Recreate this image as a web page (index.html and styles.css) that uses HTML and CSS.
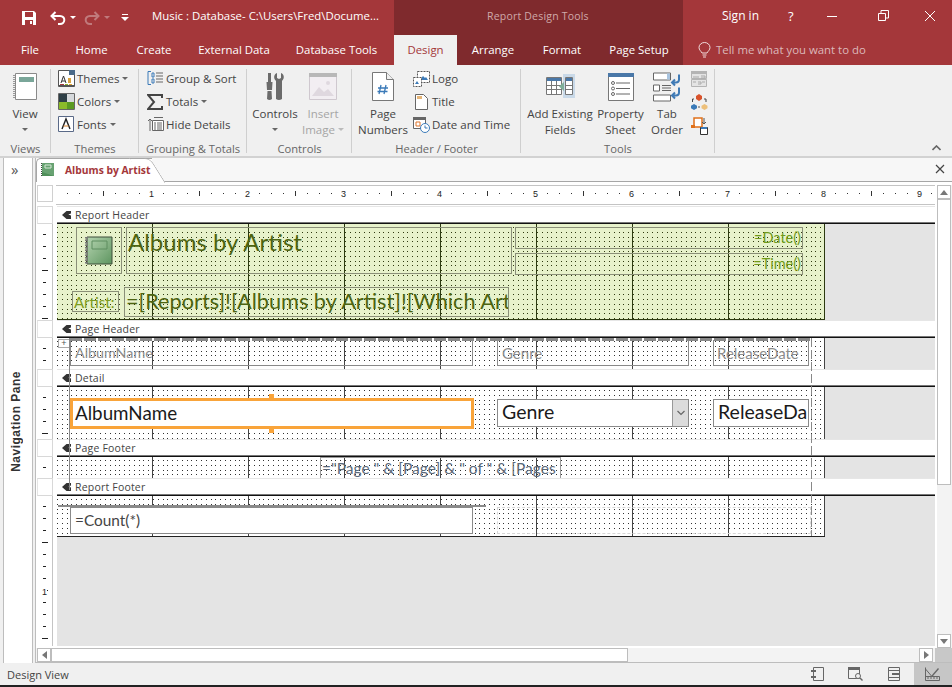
FILE: index.html
```html
<!DOCTYPE html>
<html lang="en">
<head>
    <meta charset="UTF-8">
    <title>Music : Database - Report Design</title>
    <link rel="stylesheet" href="styles.css">
</head>
<body>
    <!-- Title bar -->
    <header class="titlebar">
        <div class="qat">
            <svg class="qat-save" width="16" height="16" viewBox="0 0 16 16"><path d="M1 1h12l2 2v12H1z" fill="#fff"/><path d="M4 2h8v5H4z" fill="#a4373a"/><path d="M4 10h8v5H4z" fill="#a4373a"/><path d="M9 11h2v3H9z" fill="#fff"/></svg>
            <svg class="qat-undo" width="16" height="16" viewBox="0 0 16 16"><path d="M5.500 2 1.500 6l4 4M2 6h8c6 0 5.500 8 0 8H8" fill="none" stroke="#fff" stroke-width="2"/></svg>
            <span class="caret caret-white qat-c1"></span>
            <svg class="qat-redo" width="16" height="16" viewBox="0 0 16 16"><path d="M10.500 2l4 4-4 4M14 6H6c-6 0-5.500 8 0 8h2" fill="none" stroke="#c07a7c" stroke-width="2"/></svg>
            <span class="caret caret-faded qat-c2"></span>
            <svg class="qat-more" width="9" height="9" viewBox="0 0 9 9"><path d="M1 1h6v1H1z" fill="#fff"/><path d="M0 4h8L4 8z" fill="#fff"/></svg>
        </div>
        <div class="doc-title">Music : Database- C:\Users\Fred\Docume...</div>
        <div class="context-title">Report Design Tools</div>
        <div class="window-btns">
            <span class="sign-in">Sign in</span>
            <span class="help">?</span>
            <svg class="win-min" width="12" height="12" viewBox="0 0 12 12"><path d="M1 6.500h10" stroke="#fff"/></svg>
            <svg class="win-max" width="12" height="12" viewBox="0 0 12 12"><path d="M.5 3.500h7v7h-7zM3 3.500v-3h7.500v7.500h-3" fill="none" stroke="#fff"/></svg>
            <svg class="win-close" width="12" height="12" viewBox="0 0 12 12"><path d="M1 1l10 10M11 1 1 11" stroke="#fff"/></svg>
        </div>
    </header>

    <!-- Ribbon tabs -->
    <nav class="tabs">
        <a class="tab w-file">File</a>
        <a class="tab w-home">Home</a>
        <a class="tab w-create">Create</a>
        <a class="tab w-ext">External Data</a>
        <a class="tab w-db">Database Tools</a>
        <div class="context-tabs">
            <a class="tab w-design active">Design</a>
            <a class="tab w-arrange">Arrange</a>
            <a class="tab w-format">Format</a>
            <a class="tab w-setup">Page Setup</a>
        </div>
        <div class="tell-me">
            <svg width="13" height="16" viewBox="0 0 13 16"><path d="M4 11C3 9 1 8 1 5.500a5.500 5 0 0 1 11 0C12 8 10 9 9 11zM4.500 13h4M5 15h3" fill="none" stroke="#f1dcdc"/></svg>
            <span>Tell me what you want to do</span>
        </div>
    </nav>

    <!-- Ribbon -->
    <section class="ribbon">
        <div class="group g-views">
            <div class="group-body">
                <div class="big w-view">
                    <svg class="big-icon" width="26" height="30" viewBox="0 0 26 30"><path d="M3.500 1.500h21v26h-21z" fill="#fff" stroke="#8a8a8a"/><path d="M7 5h15v5H7z" fill="#7aa699"/><path d="M2 3v24" stroke="#999" stroke-width="2" stroke-dasharray="1 1"/></svg>
                    <span>View</span>
                    <span class="caret caret-grey"></span>
                </div>
            </div>
            <div class="group-label">Views</div>
        </div>

        <div class="group g-themes">
            <div class="group-body small-list">
                <div class="small">
                    <svg width="17" height="17" viewBox="0 0 17 17"><path d="M.5.500h16v16H.5z" fill="#fff" stroke="#555"/><path d="M11 0h6v5h-6z" fill="#4a6a8a"/><path d="M1 15h15v2H1z" fill="#555"/><path d="M3 13l2.500-7L8 13M4 11h3" fill="none" stroke="#333"/><path d="M10 8h3v5h-3z" fill="#d9a441"/><path d="M2 14h4v1H2z" fill="#a4373a"/><path d="M7 14h3v1H7z" fill="#8bb12a"/><path d="M11 14h3v1h-3z" fill="#e0a030"/></svg>
                    <span>Themes</span><span class="caret caret-grey"></span>
                </div>
                <div class="small">
                    <svg width="17" height="17" viewBox="0 0 17 17"><path d="M.5.500h16v16H.5z" fill="#fff" stroke="#666"/><path d="M1 1h8v8H1z" fill="#2e3e46"/><path d="M9 1h7v8H9z" fill="#d6d9dc"/><path d="M1 9h8v7H1z" fill="#8bbb2a"/><path d="M9 9h7v7H9z" fill="#5a9a22"/></svg>
                    <span>Colors</span><span class="caret caret-grey"></span>
                </div>
                <div class="small">
                    <svg width="17" height="17" viewBox="0 0 17 17"><path d="M.5.500h15v15H.5z" fill="#fff" stroke="#5a6a88"/><path d="M4 13 8 3l4 10" fill="none" stroke="#222" stroke-width="1.400"/><path d="M5.500 10h5" stroke="#d9822b"/></svg>
                    <span>Fonts</span><span class="caret caret-grey"></span>
                </div>
            </div>
            <div class="group-label">Themes</div>
        </div>

        <div class="group g-grouping">
            <div class="group-body small-list">
                <div class="small">
                    <svg width="17" height="15" viewBox="0 0 17 15"><path d="M4 .500H1v13h3" fill="none" stroke="#3b7ab8"/><path d="M5 2h2v4H5zM5 8h2v4H5z" fill="none" stroke="#3b7ab8"/><path d="M9 2h7M9 5h7M9 8h7M9 11h7" stroke="#666"/></svg>
                    <span>Group &amp; Sort</span>
                </div>
                <div class="small">
                    <svg width="17" height="16" viewBox="0 0 17 16"><path d="M15 4V1H1l6 7-6 7h14v-3" fill="none" stroke="#444" stroke-width="2"/></svg>
                    <span>Totals</span><span class="caret caret-grey"></span>
                </div>
                <div class="small">
                    <svg width="17" height="15" viewBox="0 0 17 15"><path d="M3 14V2M1 4l2-2 2 2" fill="none" stroke="#666"/><path d="M7 .500h9" stroke="#666"/><path d="M5.500 3.500h11v10h-11z" fill="#fff" stroke="#666"/><path d="M7 6h2M7 8h2M7 10h2M7 12h2M10 6h5M10 8h5M10 10h5M10 12h5" stroke="#666"/></svg>
                    <span>Hide Details</span>
                </div>
            </div>
            <div class="group-label">Grouping &amp; Totals</div>
        </div>

        <div class="group g-controls">
            <div class="group-body">
                <div class="big w-controls">
                    <svg class="big-icon" width="20" height="30" viewBox="0 0 20 30"><path d="M3 1h3v9H3zM1.500 10h6l-.5 8H2zM2.500 19h4l.5 8q-2.500 2-5 0z" fill="#6b6b6b"/><path d="M12 1v5l2 1 2-1V1c3 1 4 5 1 8v18q-3 2-6 0V9C8 6 9 2 12 1z" fill="#6b6b6b"/></svg>
                    <span>Controls</span>
                    <span class="caret caret-grey"></span>
                </div>
                <div class="big w-image disabled">
                    <svg class="big-icon" width="28" height="30" viewBox="0 0 28 30"><path d="M.5 1.500h27v26H.5z" fill="#f2eef2" stroke="#cfc8cf"/><path d="M0 1h28v4H0z" fill="#b8b8b8"/><path d="M3 24l7-9 5 5 4-3 6 7z" fill="#dfd8df"/><circle cx="19" cy="11" r="2" fill="#dfd8df"/></svg>
                    <span>Insert</span>
                    <span>Image<i class="caret caret-faint"></i></span>
                </div>
            </div>
            <div class="group-label">Controls</div>
        </div>

        <div class="group g-header">
            <div class="group-body">
                <div class="big w-pagenum">
                    <svg class="big-icon" width="22" height="30" viewBox="0 0 22 30"><path d="M.5.500h14l7 7v21H.500z" fill="#fff" stroke="#777"/><path d="M14.500.500v7h7" fill="#eee" stroke="#777"/><path d="M9 13l-2 9M14 13l-2 9M6 16h10M5.500 19.500h10" stroke="#3b7ab8" stroke-width="1.300"/></svg>
                    <span>Page</span>
                    <span>Numbers</span>
                </div>
                <div class="small-list list-hf">
                    <div class="small">
                        <svg width="17" height="16" viewBox="0 0 17 16"><path d="M4.500.500h12v11h-12z" fill="#fff" stroke="#555" stroke-dasharray="2 1"/><path d="M7 9l3-4 2 2 1-1 2 3z" fill="#3b7ab8"/><path d="M.5 6.500h8v9h-8z" fill="#fff" stroke="#555" stroke-dasharray="2 1"/><path d="M2 13l2-3 2 3z" fill="#3b7ab8"/></svg>
                        <span>Logo</span>
                    </div>
                    <div class="small">
                        <svg width="17" height="16" viewBox="0 0 17 16"><path d="M2.500.500h8l4 4v11h-12z" fill="#fff" stroke="#666"/><path d="M4 2h5v3H4z" fill="#e6b577"/></svg>
                        <span>Title</span>
                    </div>
                    <div class="small">
                        <svg width="17" height="17" viewBox="0 0 17 17"><path d="M.5 2.500h12v10H.5z" fill="#fff" stroke="#666"/><path d="M0 1h13v3H0z" fill="#666"/><path d="M3 6h4v4H3z" fill="none" stroke="#e0752a"/><circle cx="12" cy="12" r="4.500" fill="#fff" stroke="#3b7ab8"/><path d="M12 9.500V12h2.500" fill="none" stroke="#3b7ab8"/></svg>
                        <span>Date and Time</span>
                    </div>
                </div>
            </div>
            <div class="group-label">Header / Footer</div>
        </div>

        <div class="group g-tools">
            <div class="group-body">
                <div class="big w-fields">
                    <svg class="big-icon" width="29" height="26" viewBox="0 0 29 26"><path d="M17 0h12v24H17z" fill="#c9d9e8"/><path d="M.5 3.500h15v17H.500z" fill="#fff" stroke="#777"/><path d="M1 4h14v3H1z" fill="#4a78a8"/><path d="M.5 11.500h15M.5 15.500h15M5.500 7v13M10.500 7v13" stroke="#777"/><path d="M19.500 3.500h7v17h-7z" fill="#fff" stroke="#777"/><path d="M20 4h6v3h-6z" fill="#4a78a8"/><path d="M19.500 11.500h7M19.500 15.500h7" stroke="#777"/><path d="M18 8v9l-5-4.500z" fill="#7fb09a"/></svg>
                    <span>Add Existing</span>
                    <span>Fields</span>
                </div>
                <div class="big w-sheet">
                    <svg class="big-icon" width="26" height="28" viewBox="0 0 26 28"><path d="M.5.500h25v27H.500z" fill="#fff" stroke="#777"/><path d="M0 0h26v4H0z" fill="#4a78a8"/><path d="M8 10h14M8 15.500h14M8 21h14" stroke="#666"/><circle cx="5" cy="10" r="1.500" fill="none" stroke="#666"/><circle cx="5" cy="15.500" r="1.500" fill="none" stroke="#666"/><circle cx="5" cy="21" r="1.500" fill="none" stroke="#666"/></svg>
                    <span>Property</span>
                    <span>Sheet</span>
                </div>
                <div class="big w-order">
                    <svg class="big-icon" width="29" height="29" viewBox="0 0 29 29"><path d="M.5.500h17v7H.500z" fill="#fff" stroke="#666"/><path d="M14 1h3v6h-3z" fill="#a8c4e0"/><path d="M.5 12.500h6v6h-6z" fill="#fff" stroke="#666"/><path d="M9 13h9M9 15.500h9M9 18h9" stroke="#666"/><path d="M.5 22.500h17v6H.500z" fill="#fff" stroke="#666"/><path d="M26 2v5q0 3-3 3h-3M22 7l-3 3 3 3M26 15v5q0 3-3 3h-3M22 20l-3 3 3 3" fill="none" stroke="#3f7ab5" stroke-width="2"/></svg>
                    <span>Tab</span>
                    <span>Order</span>
                </div>
                <div class="tool-col">
                    <svg width="17" height="17" viewBox="0 0 17 17"><path d="M.5.500h15v7H.500zM.5 8.500h15v7H.500z" fill="#e4e4e4" stroke="#b4b4b4"/><path d="M0 0h16v3H0z" fill="#b4b4b4"/><path d="M2 6h6M10 5h4v2h-4M2 11h3M7 11h3v2H7M11 11h3" fill="none" stroke="#aaa"/></svg>
                    <svg width="17" height="17" viewBox="0 0 17 17"><path d="M3 5H1.500v3M13 5h2v3" fill="none" stroke="#444"/><path d="M8 0l3 2v3L8 7 5 5V2z" fill="#d9532c"/><path d="M3 10l3 1.800v2.400L3 16 0 14.200v-2.400z" fill="#3b7ab8"/><path d="M13.500 10l3 1.800v2.400L13.500 16l-3-1.800v-2.400z" fill="#edc07a"/><path d="M7 13h2" stroke="#555"/></svg>
                    <svg width="17" height="18" viewBox="0 0 17 18"><path d="M3 1h8v9H1q2 0 2-2z" fill="#fff" stroke="#e0701a" stroke-width="1.500"/><path d="M0 8h4v3H0z" fill="#e0701a"/><path d="M13 1v6M11 5l2 2 2-2" fill="none" stroke="#555"/><path d="M9.500 10.500h7v7h-7z" fill="#fff" stroke="#333"/><path d="M10 10h6v2h-6z" fill="#3b7ab8"/></svg>
                </div>
            </div>
            <div class="group-label">Tools</div>
        </div>
        <svg class="collapse" width="9" height="6" viewBox="0 0 9 6"><path d="M.5 5l4-4 4 4" fill="none" stroke="#666" stroke-width="1.600"/></svg>
    </section>

    <!-- Document area -->
    <main class="workspace">
        <aside class="nav-pane">
            <span class="nav-arrows">&raquo;</span>
            <span class="nav-title">Navigation Pane</span>
        </aside>
        <div class="document">
            <div class="doc-tabs">
                <div class="doc-tab">
                    <svg width="13" height="13" viewBox="0 0 13 13"><path d="M1 0h12v13H1z" fill="#4f8f5a"/><path d="M1 0h12v13L1 9z" fill="#82b58a" opacity=".5"/><path d="M4 2h6v3H4z" fill="none" stroke="#d5e8d5"/><path d="M.5 0v13" stroke="#444" stroke-dasharray="1 1"/></svg>
                    <span>Albums by Artist</span>
                </div>
                <svg class="doc-close" width="10" height="10" viewBox="0 0 10 10"><path d="M1 1l8 8M9 1 1 9" stroke="#444" stroke-width="1.200"/></svg>
            </div>

            <div class="designer-row">
                <div class="designer">
                    <div class="h-ruler-row">
                        <div class="corner"></div>
                        <div class="h-ruler">
                            <span><b>1</b></span><span><b>2</b></span><span><b>3</b></span><span><b>4</b></span><span><b>5</b></span><span><b>6</b></span><span><b>7</b></span><span><b>8</b></span><span><b>9</b></span>
                        </div>
                    </div>

                    <div class="band-row">
                        <div class="selector"></div>
                        <div class="band"><i class="grip"></i>Report Header</div>
                    </div>
                    <div class="body-row h-96">
                        <div class="v-ruler"></div>
                        <div class="canvas canvas-green">
                            <div class="ctl ctl-picture">
                                <svg width="28" height="29" viewBox="0 0 28 29"><defs><linearGradient id="bookFill" x1="0" y1="0" x2="1" y2="1"><stop offset="0" stop-color="#b5d4b0"/><stop offset="1" stop-color="#5e9560"/></linearGradient></defs><path d="M2 1h25v27H2z" fill="url(#bookFill)" stroke="#3e4e3a"/><path d="M7 5h15v8H7z" fill="none" stroke="#5e8e60"/><path d="M1.500 1v27" stroke="#777" stroke-width="3" stroke-dasharray="1.500 1"/></svg>
                            </div>
                            <div class="ctl ctl-title">Albums by Artist</div>
                            <div class="ctl ctl-date">=Date()</div>
                            <div class="ctl ctl-time">=Time()</div>
                            <div class="ctl ctl-artist">Artist:</div>
                            <div class="ctl ctl-which">=[Reports]![Albums by Artist]![Which Art</div>
                        </div>
                        <div class="off-page"></div>
                    </div>

                    <div class="band-row">
                        <div class="selector"></div>
                        <div class="band"><i class="grip"></i>Page Header</div>
                    </div>
                    <div class="body-row h-31">
                        <div class="v-ruler"></div>
                        <div class="canvas">
                            <div class="dash-top"></div>
                            <div class="move-handle">+</div>
                            <div class="ctl lbl lbl-album">AlbumName</div>
                            <div class="ctl lbl lbl-genre">Genre</div>
                            <div class="ctl lbl lbl-release">ReleaseDate</div>
                        </div>
                        <div class="off-page"></div>
                    </div>

                    <div class="band-row">
                        <div class="selector"></div>
                        <div class="band"><i class="grip"></i>Detail</div>
                    </div>
                    <div class="body-row h-52">
                        <div class="v-ruler"></div>
                        <div class="canvas">
                            <div class="ctl fld fld-album">AlbumName</div>
                            <i class="handle handle-top"></i>
                            <i class="handle handle-bottom"></i>
                            <div class="ctl fld fld-genre">Genre<span class="combo"><svg width="10" height="6" viewBox="0 0 10 6"><path d="M1.500 1 5 4.500 8.500 1" fill="none" stroke="#666" stroke-width="1.200"/></svg></span></div>
                            <div class="ctl fld fld-release">ReleaseDa</div>
                        </div>
                        <div class="off-page"></div>
                    </div>

                    <div class="band-row">
                        <div class="selector"></div>
                        <div class="band"><i class="grip"></i>Page Footer</div>
                    </div>
                    <div class="body-row h-21">
                        <div class="v-ruler"></div>
                        <div class="canvas">
                            <div class="ctl ctl-pages">="Page " &amp; [Page] &amp; " of " &amp; [Pages</div>
                        </div>
                        <div class="off-page"></div>
                    </div>

                    <div class="band-row">
                        <div class="selector"></div>
                        <div class="band"><i class="grip"></i>Report Footer</div>
                    </div>
                    <div class="body-row h-41">
                        <div class="v-ruler"></div>
                        <div class="canvas canvas-last">
                            <div class="sum-line"></div>
                            <div class="ctl fld ctl-count">=Count(*)</div>
                            <div class="ghost-box"></div>
                        </div>
                        <div class="off-page"></div>
                    </div>
                    <div class="filler-row">
                        <div class="v-ruler v-ruler-end"><span class="v-num">1</span></div>
                        <div class="off-page"></div>
                    </div>

                    <div class="guide guide-left"></div>
                    <div class="guide guide-right"></div>
                </div>

                <div class="v-scroll">
                    <div class="sb-btn"><i class="arrow-up"></i></div>
                    <div class="v-thumb"></div>
                    <div class="v-track"></div>
                    <div class="sb-btn"><i class="arrow-down"></i></div>
                </div>
            </div>

            <div class="h-scroll">
                <div class="sb-btn"><i class="arrow-left"></i></div>
                <div class="h-thumb"></div>
                <div class="h-track"></div>
                <div class="sb-btn"><i class="arrow-right"></i></div>
                <div class="sb-corner"></div>
            </div>
        </div>
    </main>

    <!-- Status bar -->
    <footer class="statusbar">
        <span class="status-text">Design View</span>
        <div class="views">
            <span class="view-btn"><svg width="14" height="14" viewBox="0 0 14 14"><path d="M3.500.500h10v13h-10z" fill="none" stroke="#666"/><path d="M1 3h5v2H1zM1 9h5v2H1z" fill="#666"/></svg></span>
            <span class="view-btn"><svg width="15" height="14" viewBox="0 0 15 14"><path d="M.5.500h11v11H.500z" fill="none" stroke="#666"/><path d="M0 0h12v3H0z" fill="#666"/><circle cx="10" cy="9" r="2.500" fill="#f0f0f0" stroke="#666"/><path d="M12 11l2.500 2.500" stroke="#666" stroke-width="1.400"/></svg></span>
            <span class="view-btn"><svg width="13" height="14" viewBox="0 0 13 14"><path d="M.5.500h11v13H.500z" fill="none" stroke="#666"/><path d="M0 3.500h12M0 10.500h12" stroke="#666"/><path d="M4 6h8v2H4z" fill="#666"/></svg></span>
            <span class="view-btn view-active"><svg width="15" height="14" viewBox="0 0 15 14"><path d="M.5.500v13h14v-4H.5M.5 2l6 7" fill="none" stroke="#666"/><path d="M7 8l6-7 1 1-6 7-2 1z" fill="#666"/><path d="M3 10v2M6 10v2M9 10v2M12 10v2" stroke="#666"/></svg></span>
        </div>
    </footer>
</body>
</html>
```

FILE: styles.css
```css
* { box-sizing: border-box; }
body {
    margin: 0; width: 952px; height: 687px; overflow: hidden;
    background: #222; color: #444;
    font-family: "Open Sans", "Noto Sans", sans-serif; font-size: 11.5px;
}
svg { display: block; flex: none; }

/* Title bar */
.titlebar { height: 35px; background: #a4373a; color: #fff; display: flex; position: relative; }
.qat { width: 152px; display: flex; align-items: center; padding-left: 21px; }
.qat-undo { margin-left: 13px; }
.qat-c1 { margin-left: 4px; }
.qat-redo { margin-left: 8px; }
.qat-c2 { margin-left: 4px; }
.qat-more { margin-left: 11px; }
.doc-title { width: 242px; line-height: 31px; font-size: 11.4px; white-space: nowrap; }
.context-title {
    width: 289px; height: 35px; background: #7f2a2d; color: #cfa9aa;
    line-height: 32px; padding-left: 93px; font-size: 10.500px; letter-spacing: .2px;
}
.window-btns { flex: 1; display: flex; align-items: center; position: relative; height: 31px; }
.sign-in { margin-left: 39px; width: 66px; font-size: 12px; }
.help { width: 38px; font-size: 13px; }
.win-min { margin-right: 40px; }
.win-max { margin-right: 34px; }

/* Ribbon tabs */
.tabs { height: 30px; background: #a4373a; color: #fff; display: flex; font-size: 11.4px; }
.tab { display: block; text-align: center; line-height: 29px; }
.w-file { width: 60px; }
.w-home { width: 63px; }
.w-create { width: 62px; }
.w-ext { width: 98px; }
.w-db { width: 107px; margin-right: 4px; }
.w-design { width: 63px; }
.w-arrange { width: 72px; }
.w-format { width: 66px; }
.w-setup { width: 88px; }
.context-tabs { display: flex; background: #7f2a2d; }
.tab.active { background: #f0f0f0; color: #a4373a; }
.tell-me { display: flex; align-items: center; gap: 5px; padding-left: 15px; color: #dcb9ba; height: 29px; }

/* Ribbon */
.ribbon {
    height: 93px; background: #f0f0f0; display: flex; position: relative;
    border-bottom: 2px solid #d2d2d2;
}
.group { position: relative; display: flex; flex-direction: column; padding-top: 4px; }
.group::after {
    content: ""; position: absolute; right: 0; top: 4px; bottom: 3px; width: 1px; background: #cfcfcf;
}
.group-body { flex: 1; display: flex; }
.group-label { height: 14px; line-height: 14px; text-align: center; font-size: 11.200px; color: #666; }
.g-views { width: 51px; }
.g-themes { width: 88px; }
.g-grouping { width: 108px; }
.g-controls { width: 105px; }
.g-header { width: 169px; }
.g-tools { width: 194px; }

.big { display: flex; flex-direction: column; align-items: center; line-height: 16px; white-space: nowrap; }
.big-icon { height: 30px; margin: 3px 0 4px; }
.big .caret { margin-top: 6px; }
.disabled { color: #a5a5a5; }
.disabled .caret { margin: 0 0 2px 3px; display: inline-block; vertical-align: middle; }
.w-view { width: 50px; }
.w-controls { width: 50px; margin-left: 3px; }
.w-image { width: 46px; }
.w-pagenum { width: 60px; margin-left: 1px; }
.w-fields { width: 76px; margin-left: 1px; }
.w-sheet { width: 45px; }
.w-order { width: 48px; }

.small-list { flex-direction: column; padding: 1px 0 0 7px; gap: 6px; }
.list-hf { display: flex; padding-left: 0; margin-left: 0; }
.g-grouping .small-list { padding-left: 8px; }
.small { height: 17px; display: flex; align-items: center; gap: 2px; white-space: nowrap; }
.small .caret { margin-left: 1px; }
.tool-col { display: flex; flex-direction: column; gap: 6px; margin-top: 2px; }
.collapse { position: absolute; right: 11px; bottom: 5px; }

.caret { display: block; width: 0; height: 0; border: 3px solid transparent; border-bottom: 0; }
.caret-white { border-top-color: #fff; }
.caret-faded { border-top-color: #c07a7c; }
.caret-grey { border-top-color: #666; }
.caret-faint { border-top-color: #bbb; }

/* Workspace */
.workspace { height: 505px; display: flex; background: #f0f0f0; }
.nav-pane {
    width: 30px; margin-left: 3px; flex: none; background: #fff;
    border: 1px solid #bdbdbd; border-width: 0 1px; position: relative; margin-right: 2px;
}
.nav-arrows { position: absolute; left: 7px; top: 3px; font-size: 15px; line-height: 16px; color: #555; }
.nav-title {
    position: absolute; left: 5px; top: 213px; writing-mode: vertical-rl; transform: rotate(180deg);
    font: bold 12px "Liberation Sans", sans-serif; color: #333; letter-spacing: .5px;
}
.document { flex: 1; min-width: 0; display: flex; flex-direction: column; border-left: 1px solid #bdbdbd; }

.doc-tabs {
    height: 24px; background: #f7f7f7; border-bottom: 1px solid #a6a6a6;
    display: flex; justify-content: space-between; flex: none;
}
.doc-tab {
    width: 116px; height: 24px; background: #fff; border: 1px solid #a6a6a6; border-width: 1px 0 0 1px;
    border-radius: 5px 0 0 0; display: flex; align-items: center; gap: 11px; padding: 0 0 2px 4px;
    font: bold 10.300px "Open Sans", sans-serif; color: #a4373a; white-space: nowrap; position: relative;
}
.doc-tab span, .doc-tab svg { position: relative; z-index: 1; }
.doc-tab::after {
    content: ""; position: absolute; right: -6px; top: -1px; width: 20px; height: 24px; background: #fff;
    border: 1px solid #a6a6a6; border-width: 1px 1px 0 0; border-radius: 0 6px 0 0; transform: skewX(32deg);
}
.doc-close { margin: 6px 7px 0 0; }

.designer-row { height: 466px; display: flex; padding-top: 3px; background: #fff; flex: none; }
.designer { width: 900px; margin-left: 1px; position: relative; flex: none; border-right: 2px solid #fff; }
.h-ruler-row { height: 21px; display: flex; }
.corner { width: 16px; height: 17px; border: 1px solid #d0d0d0; }
.h-ruler {
    flex: 1; height: 20px; display: flex; margin-left: 3px; border: solid #c4c4c4; border-width: 1px 0;
    font: 9px/16px "Liberation Sans", sans-serif; color: #222;
    background:
        repeating-linear-gradient(to right, transparent 0 47px, #333 47px 48px) 0 5px / 100% 5px no-repeat,
        repeating-linear-gradient(to right, transparent 0 11px, #333 11px 12px) 0 7px / 100% 1px no-repeat;
}
.h-ruler span { width: 96px; flex: none; text-align: right; position: relative; left: 3px; }
.h-ruler b { font-weight: normal; background: #fff; display: inline-block; height: 14px; padding: 0 1px; }

.band-row { display: flex; height: 18px; }
.selector { width: 16px; flex: none; background: #fff; border: 1px solid #d8d8d8; border-left-color: #e4e4e4; margin-right: 4px; }
.band {
    flex: 1; background: #fff; border-top: 1px solid #e6e6e6; border-bottom: 1px solid #111;
    box-shadow: inset 0 -1px 0 #777;
    display: flex; align-items: center; padding-left: 5px; gap: 4px;
    font-size: 10.500px; line-height: 14px; color: #444; letter-spacing: .2px;
}
.grip { width: 9px; height: 8px; background: #333; clip-path: polygon(0 50%, 50% 0, 100% 0, 100% 30%, 70% 45%, 100% 55%, 100% 100%, 50% 100%); }

.body-row { display: flex; position: relative; }
.h-96 { height: 96px; }
.h-31 { height: 31px; }
.h-52 { height: 52px; }
.h-21 { height: 21px; }
.h-41 { height: 41px; }
.filler-row { display: flex; height: 109px; }

.v-ruler {
    width: 16px; margin-right: 4px; flex: none; background-color: #fff;
    background-image: linear-gradient(to bottom, transparent 10px, #222 10px, #222 11px, transparent 11px), linear-gradient(to bottom, transparent 46px, #222 46px, #222 47px, transparent 47px);
    background-size: 3px 12px, 6px 48px;
    background-position: center 0, center 0;
    background-repeat: repeat-y;
    border-right: 1px solid #c4c4c4;
}
.v-ruler-end { position: relative; background-position: center 7px, center 7px; }
.v-num { position: absolute; left: 5px; top: 50px; font: 9px/11px "Liberation Sans", sans-serif; color: #222; background: #fff; }

.canvas {
    --paper: #fff; --dot: #333; --line: #444;
    width: 768px; flex: none; position: relative;
    background-color: var(--paper);
    background-image:
        repeating-linear-gradient(to right, transparent 0 95px, var(--line) 95px 96px),
        repeating-linear-gradient(to right, transparent 0 1px, var(--paper) 1px 4.8px),
        repeating-linear-gradient(to bottom, var(--paper) 0 3px, var(--dot) 3px 4px, var(--paper) 4px 4.8px);
}
.canvas-green { --paper: #e7f2cb; --dot: #2f3a10; --line: #2c3a10; border-bottom: 1px solid #2c3a10; }
.canvas-last { border-bottom: 1px solid #222; }
.off-page { flex: 1; background: #e4e4e4; }

/* Report controls */
.ctl { position: absolute; white-space: nowrap; overflow: hidden; }
.ctl-picture { left: 19px; top: 3px; width: 46px; height: 47px; border: 1px solid #8a8f78; display: flex; align-items: center; justify-content: center; }
.ctl-title {
    left: 69px; top: 3px; width: 386px; height: 47px; border: 1px solid #8a8f78; overflow: visible;
    font: 24px/28px Lato, sans-serif; color: #4d6410; padding-left: 1px;
}
.ctl-date, .ctl-time {
    left: 458px; width: 288px; height: 22px; border: 1px solid #8a8f78; text-align: right;
    font: 14.500px/20px Lato, sans-serif; color: #6f9a1a; padding-right: 1px;
}
.ctl-date { top: 3px; }
.ctl-time { top: 29px; }
.ctl-artist {
    left: 15px; top: 67px; width: 47px; height: 21px; border: 1px solid #8a8f78;
    font: 15px/20px Lato, sans-serif; color: #7d9c20; padding-left: 1px;
}
.ctl-which {
    left: 67px; top: 63px; width: 385px; height: 30px; border: 1px solid #8a8f78;
    font: 21.700px/27px Lato, sans-serif; color: #4d6410; padding-left: 1px;
}
.dash-top { position: absolute; left: 13px; right: 14px; top: 0; height: 3px; background: repeating-linear-gradient(to right, #888 0 12px, #fff 12px 14px); }
.move-handle {
    position: absolute; left: 1px; top: 1px; width: 12px; height: 9px; background: #fff; border: 1px solid #aaa;
    font: 9px/7px "Liberation Sans", sans-serif; text-align: center; color: #555;
}
.lbl { top: 2px; height: 26px; border: 1px solid #8a8a8a; border-top: 0; font: 15px/26px Lato, sans-serif; color: #8c8c8c; padding-left: 4px; }
.lbl-album { left: 13px; width: 403px; font-size: 14.300px; }
.lbl-genre { left: 440px; width: 192px; }
.lbl-release { left: 656px; width: 96px; padding-left: 3px; }
.fld { background: #fff; color: #1a1a1a; border: 1px solid #8a8a8a; font: 19.500px/24px Lato, sans-serif; padding-left: 4px; }
.fld-album { left: 13px; top: 11px; width: 404px; height: 31px; border: 3px solid #f9a43a; font-size: 18.800px; padding-left: 2px; }
.handle { position: absolute; left: 212px; width: 5px; height: 4px; background: #f9a43a; }
.handle-top { top: 7px; }
.handle-bottom { top: 42px; }
.fld-genre { left: 440px; top: 12px; width: 192px; height: 28px; }
.combo { position: absolute; right: 0; top: 0; width: 16px; height: 26px; background: #dcdcdc; border-left: 1px solid #999; display: flex; align-items: center; justify-content: center; }
.fld-release { left: 656px; top: 12px; width: 96px; height: 28px; padding-left: 4px; }
.ctl-pages {
    left: 263px; top: 0; width: 241px; height: 21px; border: 1px solid #9a9a9a; border-bottom: 0;
    font: 15.500px/20px Lato, sans-serif; color: #5a6878; padding-left: 1px;
}
.sum-line { position: absolute; left: 1px; top: 9px; width: 428px; height: 2px; background: #8a8a8a; }
.ctl-count { left: 13px; top: 11px; width: 403px; height: 27px; font-size: 15.400px; line-height: 25px; color: #444; }
.ghost-box { position: absolute; left: 440px; top: 11px; width: 314px; height: 27px; border: 1px dashed #d6d6d6; }

.guide { position: absolute; width: 1px; top: 153px; }
.guide-left { left: 32px; height: 152px; background: #888; }
.guide-right { left: 774px; height: 198px; background: repeating-linear-gradient(to bottom, #888 0 9px, transparent 9px 12px); }

/* Scrollbars */
.v-scroll { flex: 1; display: flex; flex-direction: column; background: #f3f3f3; padding-right: 1px; }
.sb-btn { width: 14px; height: 14px; flex: none; border: 1px solid #bdbdbd; background: #fff; display: flex; align-items: center; justify-content: center; }
.v-thumb { height: 286px; background: #fff; border: 1px solid #bdbdbd; flex: none; width: 14px; }
.v-track { flex: 1; }
.arrow-up, .arrow-down, .arrow-left, .arrow-right { width: 0; height: 0; border: 4px solid transparent; }
.arrow-up { border-top: 0; border-bottom: 5px solid #777; }
.arrow-down { border-bottom: 0; border-top: 5px solid #777; }
.arrow-left { border-left: 0; border-right: 5px solid #777; }
.arrow-right { border-right: 0; border-left: 5px solid #777; }

.h-scroll { height: 15px; flex: none; display: flex; background: #f3f3f3; padding-left: 1px; border-bottom: 1px solid #bdbdbd; }
.h-thumb { width: 577px; background: #fff; border: 1px solid #bdbdbd; }
.h-track { width: 291px; }
.sb-corner { flex: 1; background: #c8c8c8; margin-left: 2px; }

/* Status bar */
.statusbar { height: 22px; background: #f0f0f0; display: flex; justify-content: space-between; align-items: center; padding-left: 7px; }
.status-text { font-size: 11px; color: #444; }
.views { display: flex; height: 22px; align-items: center; }
.view-btn { width: 38.500px; height: 22px; display: flex; align-items: center; justify-content: center; }
.view-active { background: #c6c6c6; }
```
